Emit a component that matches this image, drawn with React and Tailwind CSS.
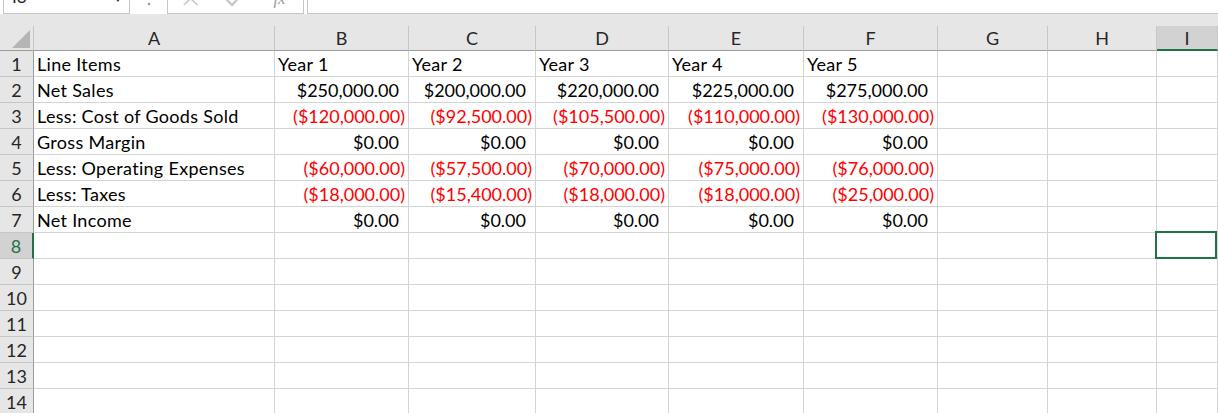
import React from 'react';

const COLS = ['A', 'B', 'C', 'D', 'E', 'F', 'G', 'H', 'I'];
const GRID = 'grid grid-cols-[34px_241px_134px_127px_133px_135px_134px_110px_109px_1fr]';

const rows = [
  ['Line Items', 'Year 1', 'Year 2', 'Year 3', 'Year 4', 'Year 5'],
  ['Net Sales', 250000, 200000, 220000, 225000, 275000],
  ['Less: Cost of Goods Sold', -120000, -92500, -105500, -110000, -130000],
  ['Gross Margin', 0, 0, 0, 0, 0],
  ['Less: Operating Expenses', -60000, -57500, -70000, -75000, -76000],
  ['Less: Taxes', -18000, -15400, -18000, -18000, -25000],
  ['Net Income', 0, 0, 0, 0, 0],
];

const money = (n) =>
  '$' + Math.abs(n).toLocaleString('en-US', { minimumFractionDigits: 2, maximumFractionDigits: 2 });

function Cell({ value, selected }) {
  if (typeof value === 'number') {
    const neg = value < 0;
    return (
      <div className={`border-r border-b border-[#d4d4d4] flex items-end justify-end pb-[3px] whitespace-nowrap ${neg ? 'text-[#ff0000] pr-[3px]' : 'text-black pr-[9px]'}`}>
        {neg ? `(${money(value)})` : money(value)}
      </div>
    );
  }
  return (
    <div className="relative border-r border-b border-[#d4d4d4] flex items-end pl-[3px] pb-[3px] whitespace-nowrap text-black tracking-[0.3px]">
      {value}
      {selected && <div className="absolute -left-[2px] -top-[2px] -bottom-[1px] right-0 border-2 border-[#217346]" />}
    </div>
  );
}

function TopBar() {
  return (
    <div className="h-[26px] bg-[#e6e6e6] flex flex-col">
      <div className="h-[14px] bg-white flex">
        <div className="ml-[3px] w-[127px] h-[14px] border-x border-b border-[#c6c6c6] bg-white flex items-end justify-between overflow-hidden">
          <span className="pl-[8px] leading-[18px] mb-[7px] text-[17px] text-[#222]">I8</span>
          <svg width="6" height="14" className="mr-[8px]" viewBox="0 0 6 14">
            <path d="M0 -1 L6 -1 L3 3 Z" fill="#444" />
          </svg>
        </div>
        <div className="w-[37px] flex justify-center">
          <svg width="6" height="14" viewBox="0 0 6 14">
            <circle cx="3" cy="4" r="1.3" fill="#9a9a9a" />
          </svg>
        </div>
        <div className="w-[137px] h-[14px] border-x border-b border-[#c6c6c6] bg-white flex items-start overflow-hidden">
          <svg width="137" height="14" viewBox="0 0 137 14">
            <path d="M16 -8 L30 5 M30 -8 L16 5" stroke="#c8c8c8" strokeWidth="1.6" fill="none" />
            <path d="M56 -4 L65 5 L78 -9" stroke="#c8c8c8" strokeWidth="2.4" fill="none" />
            <text x="107" y="4" fontFamily="Liberation Serif, serif" fontStyle="italic" fontSize="17" fill="#9a9a9a">fx</text>
          </svg>
        </div>
        <div className="ml-[3px] flex-1 h-[14px] border-l border-b border-[#c6c6c6] bg-white" />
      </div>
    </div>
  );
}

function HeaderRow() {
  return (
    <div className={`${GRID} h-[25px]`}>
      <div className="border-r border-b border-r-[#c6c6c6] border-b-[#9b9b9b] bg-[#e6e6e6] flex items-end justify-end pr-[3px] pb-[2px]">
        <svg width="18" height="18" viewBox="0 0 18 18">
          <path d="M18 0 L18 18 L0 18 Z" fill="#b5b5b5" />
        </svg>
      </div>
      {COLS.map((c) => {
        const sel = c === 'I';
        return (
          <div
            key={c}
            className={`flex items-center justify-center border-r border-r-[#c6c6c6] ${sel ? 'bg-[#d2d2d2] border-b-2 border-b-[#217346]' : 'bg-[#e6e6e6] border-b border-b-[#9b9b9b]'} text-[#262626]`}
          >
            {c}
          </div>
        );
      })}
    </div>
  );
}

export default function App() {
  const all = Array.from({ length: 14 }, (_, i) => rows[i] || []);
  return (
    <div className="w-[1218px] h-[413px] overflow-hidden bg-white text-[18px] leading-none font-['Lato',sans-serif]">
      <TopBar />
      <HeaderRow />
      {all.map((r, i) => {
        const num = i + 1;
        const selRow = num === 8;
        return (
          <div key={num} className={`${GRID} h-[26px]`}>
            <div
              className={`flex items-center justify-center border-b border-b-[#c6c6c6] ${selRow ? 'bg-[#d2d2d2] text-[#217346] border-r-2 border-r-[#217346]' : 'bg-[#e6e6e6] text-[#262626] border-r border-r-[#9b9b9b]'}`}
            >
              {num}
            </div>
            {COLS.map((c, j) => (
              <Cell key={c} value={r[j] ?? ''} selected={selRow && c === 'I'} />
            ))}
          </div>
        );
      })}
    </div>
  );
}
